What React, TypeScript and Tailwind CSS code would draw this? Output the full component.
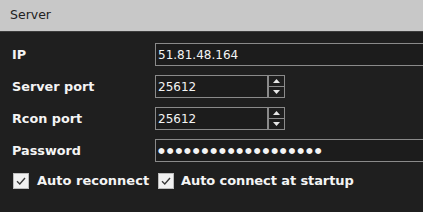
import React from "react";

const font = { fontFamily: '"DejaVu Sans", Verdana, sans-serif' };

function Check() {
  return (
    <div className="w-[16px] h-[16px] bg-[#f2f2f2] border border-[#bdbdbd] flex items-center justify-center shrink-0">
      <svg width="14" height="14" viewBox="0 0 14 14">
        <path d="M3 7.3 L5.8 9.9 L11 4" fill="none" stroke="#3a3a3a" strokeWidth="1.4" />
      </svg>
    </div>
  );
}

function Spin() {
  return (
    <div className="flex flex-col w-[17px] h-[23px] shrink-0">
      <div className="h-[12px] border border-[#8a8a8a] bg-[#1e1e1e] flex items-center justify-center">
        <svg width="7" height="4" viewBox="0 0 7 4"><path d="M3.5 0 L7 4 L0 4 Z" fill="#e8e8e8" /></svg>
      </div>
      <div className="h-[11px] border border-t-0 border-[#8a8a8a] bg-[#1e1e1e] flex items-center justify-center">
        <svg width="7" height="4" viewBox="0 0 7 4"><path d="M0 0 L7 0 L3.5 4 Z" fill="#e8e8e8" /></svg>
      </div>
    </div>
  );
}

function Row({ label, children }: { label: string; children: React.ReactNode }) {
  return (
    <div className="flex items-center h-[23px]">
      <div className="w-[155px] pl-[12px] font-bold text-[12.8px] text-[#f4f4f4] shrink-0">{label}</div>
      {children}
    </div>
  );
}

export default function App() {
  return (
    <div className="w-[423px] h-[212px] bg-[#1f1f1f] overflow-hidden" style={font}>
      <div className="h-[32px] bg-[#c8c8c8] border-b border-[#3c3c3c] flex items-center pl-[10px] text-[12.5px] text-[#222]">
        Server
      </div>
      <div className="flex flex-col gap-[9px] pt-[11px]">
        <Row label="IP">
          <div className="flex-1 h-[23px] border border-[#8a8a8a] border-r-0 bg-[#1c1c1c] flex items-center pl-[2px] text-[12px] text-[#f4f4f4] mr-[-2px]">
            51.81.48.164
          </div>
        </Row>
        <Row label="Server port">
          <div className="w-[113px] h-[23px] border border-[#8a8a8a] bg-[#1c1c1c] flex items-center pl-[2px] text-[12px] text-[#f4f4f4]">
            25612
          </div>
          <Spin />
        </Row>
        <Row label="Rcon port">
          <div className="w-[113px] h-[23px] border border-[#8a8a8a] bg-[#1c1c1c] flex items-center pl-[2px] text-[12px] text-[#f4f4f4]">
            25612
          </div>
          <Spin />
        </Row>
        <Row label="Password">
          <div className="flex-1 h-[23px] border border-[#8a8a8a] border-r-0 bg-[#1c1c1c] flex items-center pl-[2px] text-[7.8px] text-[#f4f4f4] mr-[-2px] tracking-[1.9px]">
            ●●●●●●●●●●●●●●●●●●●
          </div>
        </Row>
        <div className="flex items-center h-[20px] pl-[13px] font-bold text-[13px] text-[#f4f4f4]">
          <Check />
          <span className="ml-[8px]">Auto reconnect</span>
          <div className="ml-[9px]"><Check /></div>
          <span className="ml-[7px] tracking-[-0.1px]">Auto connect at startup</span>
        </div>
      </div>
    </div>
  );
}
